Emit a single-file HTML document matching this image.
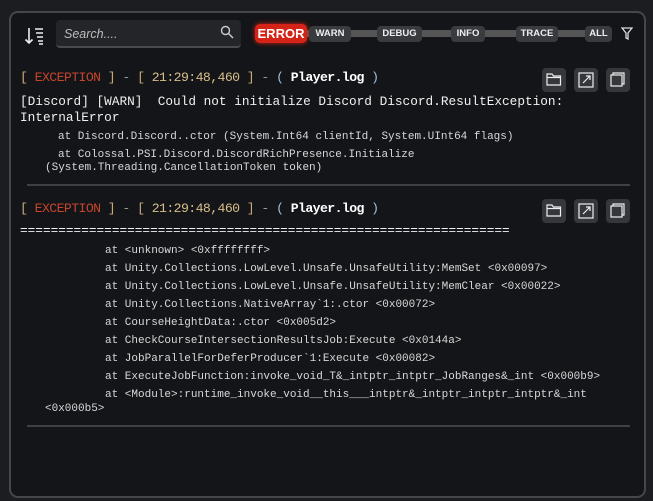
<!DOCTYPE html>
<html><head><meta charset="utf-8"><style>
*{margin:0;padding:0;box-sizing:border-box}
body{width:653px;height:501px;background:#1c1d20;position:relative;overflow:hidden;font-family:"Liberation Mono",monospace;color:#e6e6e6}
.panel{position:absolute;left:9px;top:11px;width:637px;height:487px;background:#141518;border:2px solid #45474b;border-radius:9px}
.abs{position:absolute}
.search{left:56px;top:20px;width:185px;height:28px;background:#242529;border-radius:4px;border-bottom:2px solid #4a4b4f}
.search span{position:absolute;left:8px;top:7px;font-family:"Liberation Sans",sans-serif;font-style:italic;font-size:12.5px;color:#bdbdbd}
.bar{left:300px;top:30px;width:310px;height:7px;background:#555}
.pill{position:absolute;top:26px;height:16px;background:#3a3b3f;border-radius:4px;font-family:"Liberation Sans",sans-serif;font-weight:bold;font-size:9.5px;color:#eee;text-align:center;line-height:16px}
.err{left:255px;top:24px;width:52px;height:19px;background:#d42418;border-radius:5px;color:#fff;font-family:"Liberation Sans",sans-serif;font-weight:bold;font-size:13px;text-align:center;line-height:19px;box-shadow:0 0 5px #d42418}
.hdr{position:absolute;left:20px;font-size:13.2px;white-space:pre;letter-spacing:-0.6px}
.b{color:#c9a878}.ex{color:#c4452c}.t{color:#d7bf8c}.d{color:#999}.p{color:#9fc0de}.f{color:#fff;font-weight:bold}
.btn{position:absolute;width:24px;height:24px;background:#35373b;border-radius:4px}
.msg{position:absolute;left:20px;font-size:12.75px;white-space:pre;color:#f0f0f0;line-height:16px}
.st{position:absolute;font-size:11px;white-space:pre;color:#d8d8d8}
.sep{position:absolute;left:27px;width:603px;height:2px;background:#3e4044}
</style></head><body>
<div class="panel"></div>
<svg class="abs" style="left:24px;top:25px" width="22" height="22" viewBox="0 0 22 22" fill="none" stroke="#eee" stroke-width="1.6"><path d="M5 3v15M1.5 14.5L5 18l3.5-3.5"/><path d="M11 4h8M12 8h7M13 12h6M14 16h5M15 19h4"/></svg>
<div class="abs search"><span>Search....</span>
<svg class="abs" style="left:164px;top:5px" width="14" height="14" viewBox="0 0 14 14" fill="none" stroke="#ccc" stroke-width="1.4"><circle cx="5.5" cy="5.5" r="4"/><path d="M8.5 8.5L13 13"/></svg></div>
<div class="abs bar"></div>
<div class="abs err">ERROR</div>
<div class="pill" style="left:309px;width:42px">WARN</div>
<div class="pill" style="left:377px;width:45px">DEBUG</div>
<div class="pill" style="left:451px;width:34px">INFO</div>
<div class="pill" style="left:516px;width:42px">TRACE</div>
<div class="pill" style="left:585px;width:27px">ALL</div>
<svg class="abs" style="left:621px;top:27px" width="12" height="13" viewBox="0 0 12 13" fill="none" stroke="#ddd" stroke-width="1.3"><path d="M1 1h10L7 6v6L5 11V6z"/></svg>

<div class="hdr" style="top:70px"><span class="b">[ </span><span class="ex">EXCEPTION</span><span class="b"> ]</span><span class="d"> - </span><span class="b">[ </span><span class="t">21:29:48,460</span><span class="b"> ]</span><span class="d"> - </span><span class="p">( </span><span class="f">Player.log</span><span class="p"> )</span></div>
<div class="btn" style="left:542px;top:68px"></div><div class="btn" style="left:574px;top:68px"></div><div class="btn" style="left:606px;top:68px"></div>
<div class="msg" style="top:94px">[Discord] [WARN]  Could not initialize Discord Discord.ResultException:
InternalError</div>
<div class="st" style="left:58px;top:131px">at Discord.Discord..ctor (System.Int64 clientId, System.UInt64 flags)</div>
<div class="st" style="left:58px;top:149px">at Colossal.PSI.Discord.DiscordRichPresence.Initialize</div>
<div class="st" style="left:45px;top:162px">(System.Threading.CancellationToken token)</div>
<div class="sep" style="top:184px"></div>

<div class="hdr" style="top:201px"><span class="b">[ </span><span class="ex">EXCEPTION</span><span class="b"> ]</span><span class="d"> - </span><span class="b">[ </span><span class="t">21:29:48,460</span><span class="b"> ]</span><span class="d"> - </span><span class="p">( </span><span class="f">Player.log</span><span class="p"> )</span></div>
<div class="btn" style="left:542px;top:199px"></div><div class="btn" style="left:574px;top:199px"></div><div class="btn" style="left:606px;top:199px"></div>
<div class="msg" style="top:223px">================================================================</div>
<div class="st" style="left:105px;top:245px">at &lt;unknown&gt; &lt;0xffffffff&gt;</div>
<div class="st" style="left:105px;top:263px">at Unity.Collections.LowLevel.Unsafe.UnsafeUtility:MemSet &lt;0x00097&gt;</div>
<div class="st" style="left:105px;top:281px">at Unity.Collections.LowLevel.Unsafe.UnsafeUtility:MemClear &lt;0x00022&gt;</div>
<div class="st" style="left:105px;top:299px">at Unity.Collections.NativeArray`1:.ctor &lt;0x00072&gt;</div>
<div class="st" style="left:105px;top:317px">at CourseHeightData:.ctor &lt;0x005d2&gt;</div>
<div class="st" style="left:105px;top:335px">at CheckCourseIntersectionResultsJob:Execute &lt;0x0144a&gt;</div>
<div class="st" style="left:105px;top:353px">at JobParallelForDeferProducer`1:Execute &lt;0x00082&gt;</div>
<div class="st" style="left:105px;top:371px">at ExecuteJobFunction:invoke_void_T&amp;_intptr_intptr_JobRanges&amp;_int &lt;0x000b9&gt;</div>
<div class="st" style="left:105px;top:389px">at &lt;Module&gt;:runtime_invoke_void__this___intptr&amp;_intptr_intptr_intptr&amp;_int</div>
<div class="st" style="left:45px;top:403px">&lt;0x000b5&gt;</div>
<div class="sep" style="top:425px"></div>

<svg class="abs" style="left:0;top:0" width="653" height="501" fill="none" stroke="#eee" stroke-width="1.2">
<path d="M547 74h5l1.5 2h7v9h-13.5z M547 77.5h14"/><rect x="579" y="73" width="14" height="14"/><path d="M583 83l7-7M586 76h4v4"/><rect x="611" y="75" width="11" height="11"/><path d="M613 75v-2h11v11h-2"/>
<path d="M547 205h5l1.5 2h7v9h-13.5z M547 208.5h14"/><rect x="579" y="204" width="14" height="14"/><path d="M583 214l7-7M586 207h4v4"/><rect x="611" y="206" width="11" height="11"/><path d="M613 206v-2h11v11h-2"/>
</svg>
</body></html>
